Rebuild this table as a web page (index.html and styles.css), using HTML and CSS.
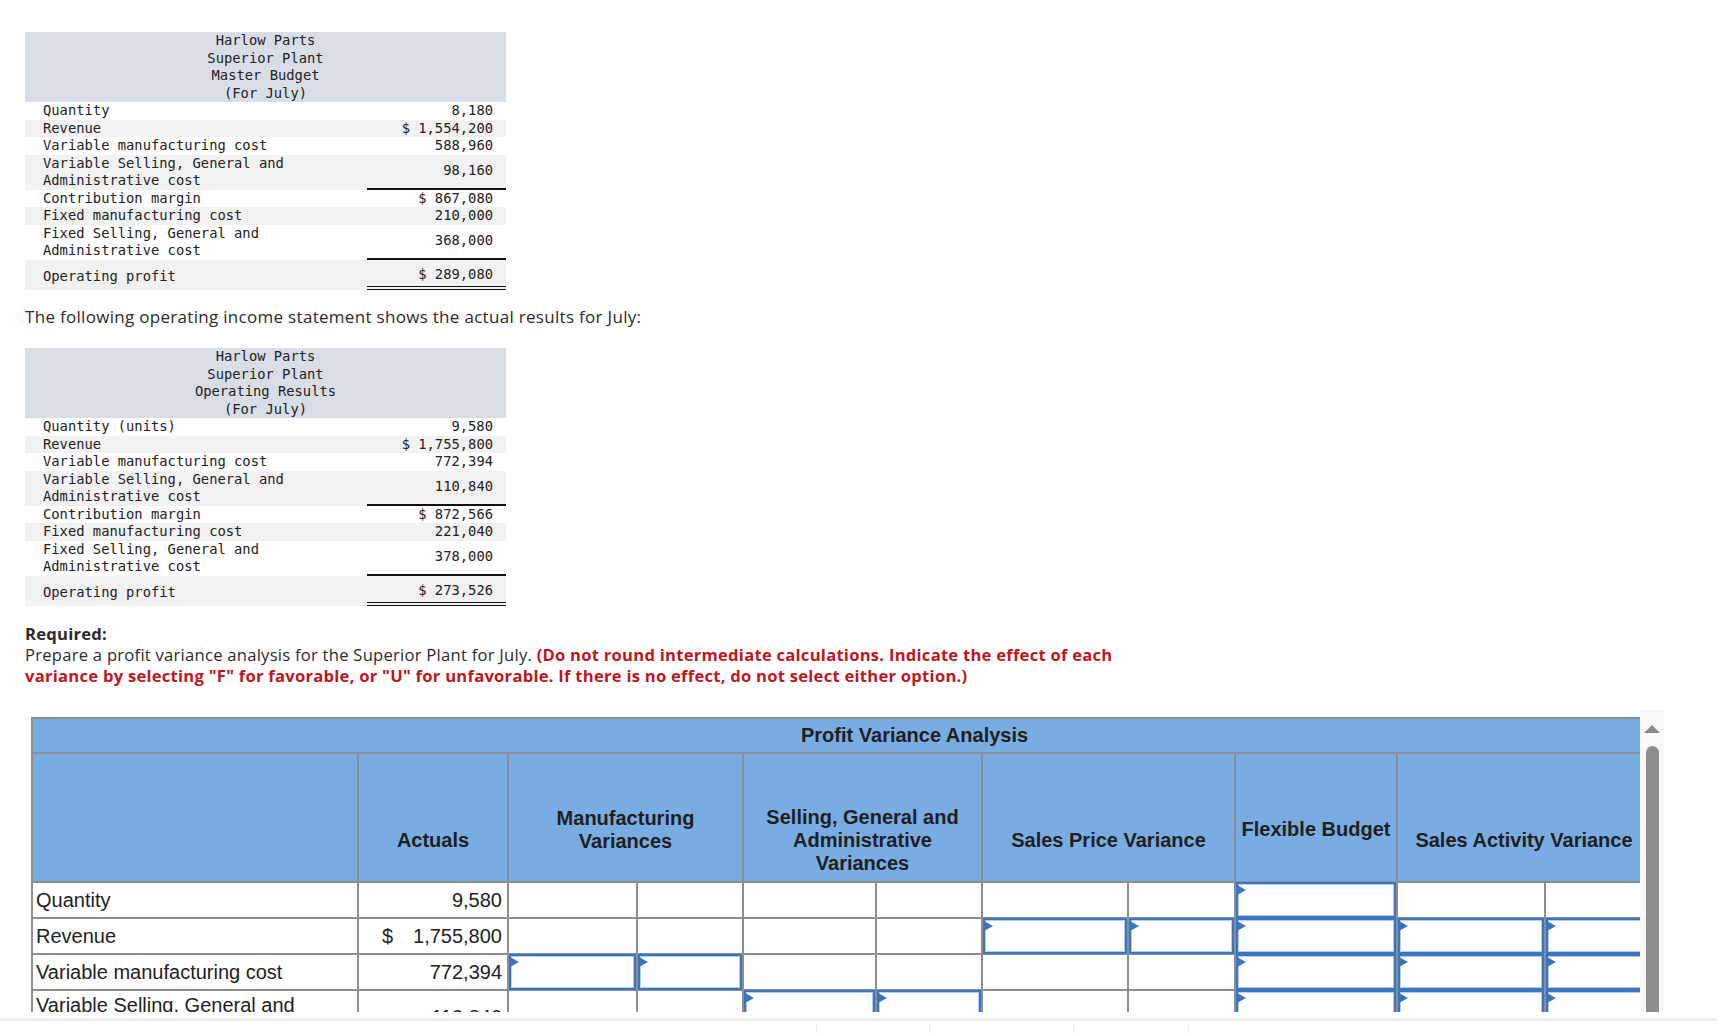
FILE: index.html
```html
<!DOCTYPE html>
<html>
<head>
<meta charset="utf-8">
<title>Profit Variance Analysis</title>
<link rel="stylesheet" href="styles.css">
</head>
<body>
<div class="page">
  <table class="stmt">
    <colgroup><col class="c1"><col class="c2"></colgroup>
    <tr><td colspan="2" class="sh">Harlow Parts<br>Superior Plant<br>Master Budget<br>(For July)</td></tr>
    <tr><td class="lb">Quantity</td><td class="vl">8,180</td></tr>
    <tr class="alt"><td class="lb">Revenue</td><td class="vl">$ 1,554,200</td></tr>
    <tr><td class="lb">Variable manufacturing cost</td><td class="vl">588,960</td></tr>
    <tr class="alt"><td class="lb">Variable Selling, General and<br>Administrative cost</td><td class="vl ul">98,160</td></tr>
    <tr><td class="lb">Contribution margin</td><td class="vl">$ 867,080</td></tr>
    <tr class="alt"><td class="lb">Fixed manufacturing cost</td><td class="vl">210,000</td></tr>
    <tr><td class="lb">Fixed Selling, General and<br>Administrative cost</td><td class="vl ul">368,000</td></tr>
    <tr class="alt op"><td class="lb">Operating profit</td><td class="vl dbl">$ 289,080</td></tr>
  </table>

  <p class="intro">The following operating income statement shows the actual results for July:</p>

  <table class="stmt">
    <colgroup><col class="c1"><col class="c2"></colgroup>
    <tr><td colspan="2" class="sh">Harlow Parts<br>Superior Plant<br>Operating Results<br>(For July)</td></tr>
    <tr><td class="lb">Quantity (units)</td><td class="vl">9,580</td></tr>
    <tr class="alt"><td class="lb">Revenue</td><td class="vl">$ 1,755,800</td></tr>
    <tr><td class="lb">Variable manufacturing cost</td><td class="vl">772,394</td></tr>
    <tr class="alt"><td class="lb">Variable Selling, General and<br>Administrative cost</td><td class="vl ul">110,840</td></tr>
    <tr><td class="lb">Contribution margin</td><td class="vl">$ 872,566</td></tr>
    <tr class="alt"><td class="lb">Fixed manufacturing cost</td><td class="vl">221,040</td></tr>
    <tr><td class="lb">Fixed Selling, General and<br>Administrative cost</td><td class="vl ul">378,000</td></tr>
    <tr class="alt op"><td class="lb">Operating profit</td><td class="vl dbl">$ 273,526</td></tr>
  </table>

  <p class="req"><b>Required:</b><br>Prepare a profit variance analysis for the Superior Plant for July. <span class="red">(Do not round intermediate calculations. Indicate the effect of each<br>variance by selecting "F" for favorable, or "U" for unfavorable. If there is no effect, do not select either option.)</span></p>

  <div class="pva">
    <div class="view">
      <table class="grid">
        <colgroup>
          <col class="w326"><col class="w150"><col class="w129"><col class="w106"><col class="w133"><col class="w106">
          <col class="w146"><col class="w107"><col class="w162"><col class="w148"><col class="w106"><col class="w148">
        </colgroup>
        <tr class="h1"><th colspan="12">Profit Variance Analysis</th></tr>
        <tr class="h2">
          <th><div class="hc"></div></th>
          <th><div class="hc">Actuals</div></th>
          <th colspan="2"><div class="hc up">Manufacturing<br>Variances</div></th>
          <th colspan="2"><div class="hc">Selling, General and<br>Administrative<br>Variances</div></th>
          <th colspan="2"><div class="hc">Sales Price Variance</div></th>
          <th><div class="hc up">Flexible Budget</div></th>
          <th colspan="2"><div class="hc">Sales Activity Variance</div></th>
          <th><div class="hc"></div></th>
        </tr>
        <tr>
          <td class="lab">Quantity</td><td class="num">9,580</td>
          <td></td><td></td><td></td><td></td><td></td><td></td>
          <td class="in"><i class="box"></i></td>
          <td></td><td></td><td></td>
        </tr>
        <tr>
          <td class="lab">Revenue</td><td class="num"><span class="cur">$</span>1,755,800</td>
          <td></td><td></td><td></td><td></td>
          <td class="in"><i class="box"></i></td><td class="in"><i class="box"></i></td>
          <td class="in"><i class="box"></i></td>
          <td class="in"><i class="box"></i></td><td class="in"><i class="box"></i></td><td></td>
        </tr>
        <tr>
          <td class="lab">Variable manufacturing cost</td><td class="num">772,394</td>
          <td class="in"><i class="box"></i></td><td class="in"><i class="box"></i></td>
          <td></td><td></td><td></td><td></td>
          <td class="in"><i class="box"></i></td>
          <td class="in"><i class="box"></i></td><td class="in"><i class="box"></i></td><td></td>
        </tr>
        <tr class="two">
          <td class="lab">Variable Selling, General and<br>Administrative cost</td><td class="num">110,840</td>
          <td></td><td></td>
          <td class="in"><i class="box"></i></td><td class="in"><i class="box"></i></td>
          <td></td><td></td>
          <td class="in"><i class="box"></i></td>
          <td class="in"><i class="box"></i></td><td class="in"><i class="box"></i></td><td></td>
        </tr>
      </table>
    </div>
    <div class="sb"><span class="arr"></span><span class="thumb"></span></div>
  </div>
</div>
<div class="foot">
  <div class="fx"><span class="s1"></span><span class="s2"></span><span class="s3"></span><span class="s4"></span></div>
</div>
</body>
</html>
```

FILE: styles.css
```css
* { box-sizing: border-box; }
html, body { margin: 0; padding: 0; background: #fff; }
body { font-family: "Open Sans", "Liberation Sans", sans-serif; color: #2b2b2b; }

.page { padding: 32px 0 0 25px; }

/* statements */
.stmt {
  border-collapse: separate;
  border-spacing: 0;
  table-layout: fixed;
  width: 481px;
  font-family: "DejaVu Sans Mono", "Liberation Mono", monospace;
  font-size: 13.8px;
  line-height: 17.5px;
  color: #222;
}
.stmt col.c1 { width: 342px; }
.stmt col.c2 { width: 139px; }
.stmt td { padding: 0; vertical-align: middle; white-space: nowrap; }
.stmt .sh { background: #d9dde6; text-align: center; }
.stmt .alt td { background: #f2f2f2; }
.stmt .lb { padding-left: 18px; }
.stmt .vl { text-align: right; padding-right: 13px; }
.stmt .ul { border-bottom: 2px solid #111; }
.stmt .op td { padding-top: 6px; padding-bottom: 3px; }
.stmt .op .dbl { border-bottom: 4px double #111; }

.intro { margin: 16px 0 20px; font-size: 17px; line-height: 22px; letter-spacing: 0.3px; }

.req { margin: 17px 0 0; font-size: 16.6px; line-height: 21px; letter-spacing: 0.25px; }
.req b { font-weight: 700; }
.req .red { color: #c0161c; font-weight: 700; }

/* profit variance grid */
.pva { display: flex; margin: 23px 0 0 6px; height: 303px; }
.view { width: 1609px; height: 303px; overflow: hidden; padding-top: 8px; }
.grid {
  border-collapse: separate;
  border-spacing: 0;
  table-layout: fixed;
  width: 1769px;
  border-left: 2px solid #8e8e8e;
  border-top: 2px solid #8e8e8e;
  font-family: "Liberation Sans", Arial, sans-serif;
  font-size: 20px;
  color: #222;
}
.grid col.w326 { width: 326px; }
.grid col.w150 { width: 150px; }
.grid col.w129 { width: 129px; }
.grid col.w106 { width: 106px; }
.grid col.w133 { width: 133px; }
.grid col.w146 { width: 146px; }
.grid col.w107 { width: 107px; }
.grid col.w162 { width: 162px; }
.grid col.w148 { width: 148px; }
.grid th, .grid td {
  border-right: 2px solid #8e8e8e;
  border-bottom: 2px solid #8e8e8e;
  padding: 0;
}
.grid th { background: #78ace3; font-weight: 700; text-align: center; color: #1f1f1f; }
.grid .h1 th { line-height: 33px; text-align: left; padding-left: 768px; }
.grid .h2 th { vertical-align: top; }
.hc {
  height: 127px;
  display: flex;
  flex-direction: column;
  justify-content: center;
  padding-top: 46px;
  line-height: 23px;
  white-space: nowrap;
}
.hc.up { padding-bottom: 22px; }

.grid td { line-height: 23px; padding: 6px 5px 5px; vertical-align: middle; white-space: nowrap; background: #fff; }
.grid td.lab { padding-left: 3px; }
.grid tr.two td { padding-top: 3px; padding-bottom: 3px; }
.grid td.num { text-align: right; }
.grid .cur { float: left; margin-left: 18px; }
.grid td.in { position: relative; }
.box {
  position: absolute;
  left: 0; right: 0; top: -1px; bottom: -1px;
  border: 2px solid #3a76c0;
  box-shadow: inset 0 0 0 1px #b6cdee;
  background: #fff;
}
.box::before {
  content: "";
  position: absolute;
  left: -1px; top: 1px;
  border-left: 9px solid #3a74be;
  border-top: 5px solid transparent;
  border-bottom: 5px solid transparent;
}

.sb {
  width: 24px;
  height: 303px;
  background: #f9f9f9;
  display: flex;
  flex-direction: column;
  align-items: center;
  overflow: hidden;
}
.arr {
  margin-top: 16px;
  width: 0; height: 0;
  border-left: 8px solid transparent;
  border-right: 8px solid transparent;
  border-bottom: 8px solid #8a8a8a;
}
.thumb {
  margin-top: 13px;
  width: 13px;
  flex: 1;
  background: #8c8c8c;
  border-radius: 7px 7px 0 0;
}

.foot { margin-top: 6px; border-top: 3px solid #f1f1f1; height: 15px; }
.fx { display: flex; margin: 4px 0 0 816px; height: 8px; }
.fx span { border-left: 1px solid #ececec; }
.fx .s1 { width: 113px; }
.fx .s2 { width: 144px; }
.fx .s3 { width: 115px; }
.fx .s4 { width: 1px; }
```
